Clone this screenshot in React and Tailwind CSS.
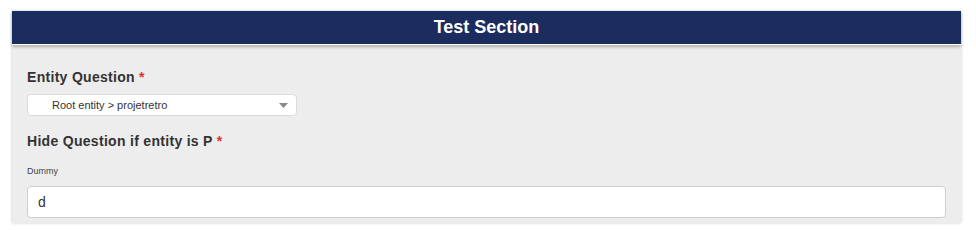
import React from 'react'

function Required() {
  return <span className="text-[#e0312f] ml-1">*</span>
}

export default function App() {
  return (
    <div className="bg-white w-[976px] h-[230px] pt-[11px] pl-3 font-['Liberation_Sans',Arial,sans-serif]">
      <div className="w-[949px] bg-[#ededed] shadow-[0_0_3px_rgba(0,0,0,0.2)]">
        <div className="bg-[#1b2c5f] h-[34px] border-b border-white shadow-[0_2px_3px_rgba(0,0,0,0.25)] flex items-center justify-center">
          <h1 className="text-white font-bold text-[18px]">Test Section</h1>
        </div>
        <div className="px-[15px] pt-[24px] pb-[5px]">
          <label className="block text-[14px] font-bold text-[#333] tracking-[0.3px] leading-[16px]">
            Entity Question<Required />
          </label>
          <div className="mt-[9px] w-[270px] h-[22px] bg-white border border-[#dcdcdc] rounded-[4px] flex items-center justify-between pl-[24px] pr-[8px]">
            <span className="text-[11px] text-[#333]">Root entity &gt; projetretro</span>
            <svg width="9" height="5" viewBox="0 0 9 5"><path d="M0 0h9L4.5 5z" fill="#888" /></svg>
          </div>
          <label className="block mt-[17px] text-[14px] font-bold text-[#333] tracking-[0.3px] leading-[16px]">
            Hide Question if entity is P<Required />
          </label>
          <div className="mt-[17px] text-[9px] text-[#444] leading-[10px]">Dummy</div>
          <div className="mt-[10px] h-[32px] bg-white border border-[#cfcfcf] rounded-[4px] flex items-center px-[10px]">
            <span className="text-[14px] text-[#333]">d</span>
          </div>
        </div>
      </div>
    </div>
  )
}
